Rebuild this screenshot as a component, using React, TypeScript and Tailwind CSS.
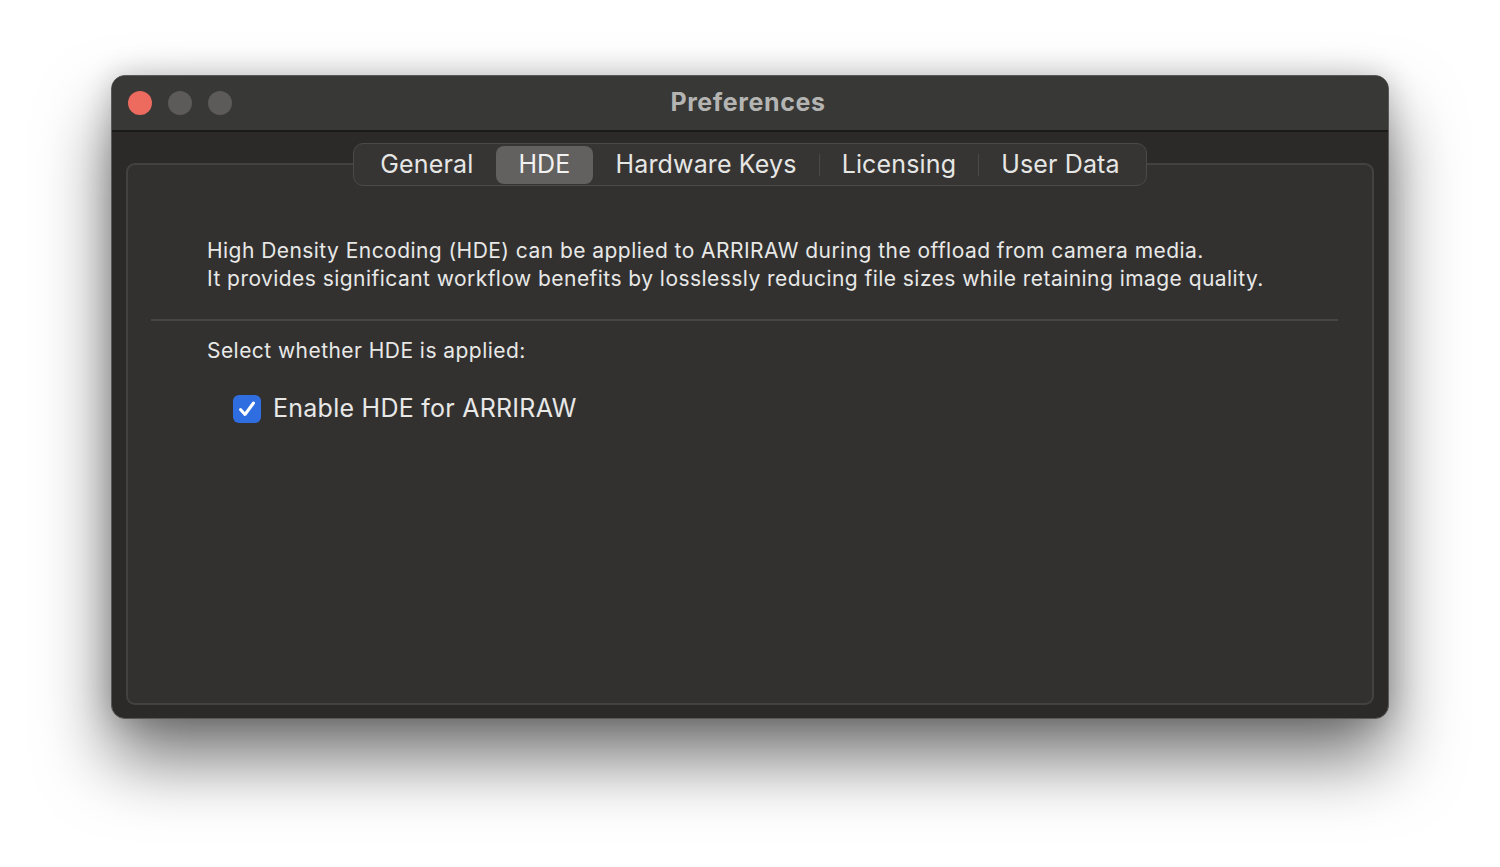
import { useState } from 'react';

const tabs = ['General', 'HDE', 'Hardware Keys', 'Licensing', 'User Data'];

export default function App() {
  const [active, setActive] = useState('HDE');
  const [enabled, setEnabled] = useState(true);

  return (
    <div className="min-h-screen w-full bg-white pt-[75px] pl-[111px]" style={{ fontFamily: 'Inter, "Noto Sans", sans-serif' }}>
      <div className="w-[1278px] h-[644px] rounded-[14px] bg-[#2b2a28] border border-[#5a5957] shadow-[0_40px_70px_rgba(0,0,0,0.55),0_0_30px_rgba(0,0,0,0.2)] flex flex-col overflow-hidden">
        {/* title bar */}
        <div className="h-[56px] bg-[#383836] border-b-2 border-[#1a1a19] flex items-center shrink-0">
          <div className="flex gap-[16px] pl-[16px]">
            <span className="w-[24px] h-[24px] rounded-full bg-[#ed6a5e]" />
            <span className="w-[24px] h-[24px] rounded-full bg-[#5c5b5a]" />
            <span className="w-[24px] h-[24px] rounded-full bg-[#5c5b5a]" />
          </div>
          <div className="flex-1 text-center text-[25px] font-bold tracking-[0.6px] text-[#b4b4b3] pr-[124px]">Preferences</div>
        </div>

        {/* body */}
        <div className="flex-1 flex flex-col px-[14px] pt-[11px] pb-[13px]">
          <div className="flex justify-center relative z-10">
            <div className="flex items-center h-[43px] px-[4px] rounded-[10px] bg-[#363533] border border-[#4b4a48]">
              {tabs.map((t, i) => {
                const sel = t === active;
                const prevSel = i > 0 && tabs[i - 1] === active;
                return (
                  <div key={t} className="flex items-center">
                    {i > 0 && (
                      <span className={`w-px h-[22px] ${sel || prevSel || i === 1 ? 'bg-transparent' : 'bg-[#4a4947]'}`} />
                    )}
                    <button
                      onClick={() => setActive(t)}
                      className={`h-[38px] px-[22px] rounded-[8px] text-[25px] leading-none tracking-[0.15px] ${sel ? 'bg-[#62615f] text-[#f2f2f2]' : 'text-[#e6e6e5]'}`}
                    >
                      {t}
                    </button>
                  </div>
                );
              })}
            </div>
          </div>

          <div className="flex-1 -mt-[23px] rounded-[9px] bg-[#323130] border-2 border-[#434240] pt-[72px] pl-[79px] pr-[34px]">
            <p className="text-[21px] leading-[28px] text-[#e8e8e7] tracking-[0.45px]">
              High Density Encoding (HDE) can be applied to ARRIRAW during the offload from camera media.
              <br />
              It provides significant workflow benefits by losslessly reducing file sizes while retaining image quality.
            </p>
            <div className="h-[2px] bg-[#474644] mt-[26px] -ml-[56px]" />
            <p className="mt-[16px] text-[21px] leading-[28px] text-[#e8e8e7] tracking-[0.45px]">Select whether HDE is applied:</p>
            <label className="flex items-center gap-[12px] mt-[25px] ml-[26px] cursor-pointer w-fit">
              <span
                onClick={() => setEnabled(!enabled)}
                className={`w-[28px] h-[28px] rounded-[6px] flex items-center justify-center ${enabled ? 'bg-[#2f6ee0]' : 'bg-[#4a4947]'}`}
              >
                {enabled && (
                  <svg width="20" height="20" viewBox="0 0 20 20" fill="none">
                    <path d="M3.5 10.5l4.5 5L16.5 4" stroke="white" strokeWidth="3" strokeLinecap="round" strokeLinejoin="round" />
                  </svg>
                )}
              </span>
              <span className="text-[25px] text-[#e8e8e7] tracking-[0.25px]">Enable HDE for ARRIRAW</span>
            </label>
          </div>
        </div>
      </div>
    </div>
  );
}
